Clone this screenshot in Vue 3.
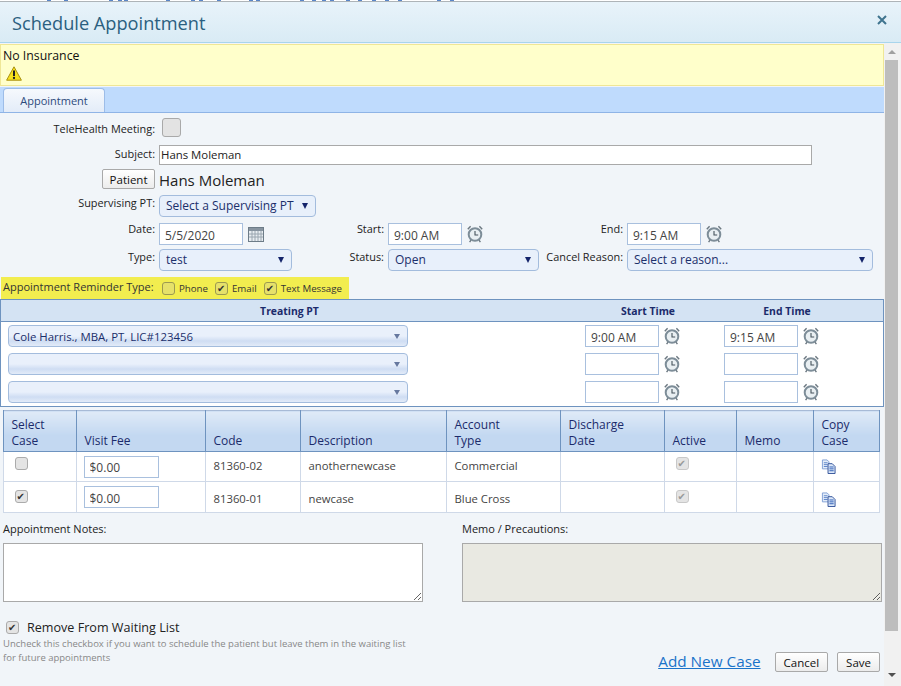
<template>
  <div class="page">
    <svg class="defs" aria-hidden="true">
      <symbol id="clock" viewBox="0 0 16 18">
        <path d="M.8 4.2 L3.6 1.2 M15.2 4.2 L12.4 1.2 M2.6 17.2 L4 15.2 M13.4 17.2 L12 15.2" stroke="#6b7780" stroke-width="1.4" fill="none" />
        <circle cx="8" cy="9.5" r="6.3" fill="#e9eff2" stroke="#7d8d98" stroke-width="2" />
        <path d="M8 6 V10 H11.2" stroke="#46535c" stroke-width="1.1" fill="none" />
      </symbol>
      <symbol id="copy" viewBox="0 0 16 16">
        <path d="M1.5 1 H6.5 L8.5 3 V10.5 H1.5 Z" fill="#e4edf9" stroke="#7f9fd4" />
        <path d="M3 4 H7 M3 6 H7 M3 8 H7" stroke="#5b82c8" />
        <path d="M7.5 5 H12 L15 8 V15.5 H7.5 Z" fill="#dbe7f8" stroke="#2e4f98" />
        <path d="M9 8.5 H13.5 M9 10.5 H13.5 M9 12.5 H13.5" stroke="#2e5db5" />
      </symbol>
    </svg>

    <div class="behind"><i v-for="b in behindBits" :key="b" :style="{ left: b + 'px' }"></i></div>

    <div class="modal">
      <header class="modal-head">
        <h1>Schedule Appointment</h1>
        <svg class="close" viewBox="0 0 10 10"><path d="M1 1 L9 9 M9 1 L1 9" stroke="#3f748f" stroke-width="2" /></svg>
      </header>

      <div class="modal-body">
        <div class="content">
          <div class="notice">
            <div>No Insurance</div>
            <svg class="warn" viewBox="0 0 16 15">
              <path d="M8 .8 L15.4 14.2 H.6 Z" fill="#f7e11c" stroke="#a88f10" stroke-linejoin="round" />
              <path d="M8 4.6 V10" stroke="#222" stroke-width="2" />
              <circle cx="8" cy="12" r="1.15" fill="#222" />
            </svg>
          </div>

          <div class="tabs"><div class="tab">Appointment</div></div>

          <div class="form">
            <div class="row telehealth">
              <label class="lbl">TeleHealth Meeting:</label>
              <span class="toggle"></span>
            </div>
            <div class="row subject">
              <label class="lbl">Subject:</label>
              <input class="subject-input" type="text" value="Hans Moleman" />
            </div>
            <div class="row patient">
              <div class="lbl"><button class="btn">Patient</button></div>
              <span class="patient-name">Hans Moleman</span>
            </div>
            <div class="row supervising">
              <label class="lbl">Supervising PT:</label>
              <div class="sel sup-sel"><select><option>Select a Supervising PT</option></select></div>
            </div>

            <div class="when">
              <label class="lbl up">Date:</label>
              <div class="field">
                <input class="txt date" type="text" value="5/5/2020" />
                <svg class="cal" viewBox="0 0 16 15">
                  <rect x=".5" y=".5" width="15" height="14" fill="#e8edf1" stroke="#6d7c88" />
                  <rect x="1" y="1" width="14" height="3" fill="#8794a0" />
                  <path d="M1 7 H15 M1 10 H15 M4 4 V14 M7 4 V14 M10 4 V14 M13 4 V14" stroke="#9aa6b0" />
                </svg>
              </div>
              <label class="lbl up">Start:</label>
              <div class="field">
                <input class="txt time" type="text" value="9:00 AM" />
                <svg class="clock"><use href="#clock" /></svg>
              </div>
              <label class="lbl up">End:</label>
              <div class="field">
                <input class="txt time" type="text" value="9:15 AM" />
                <svg class="clock"><use href="#clock" /></svg>
              </div>

              <label class="lbl">Type:</label>
              <div class="sel type-sel"><select><option>test</option></select></div>
              <label class="lbl">Status:</label>
              <div class="sel"><select><option>Open</option></select></div>
              <label class="lbl">Cancel Reason:</label>
              <div class="sel"><select><option>Select a reason...</option></select></div>
            </div>
          </div>

          <div class="reminder">
            <span class="reminder-title">Appointment Reminder Type:</span>
            <label v-for="r in reminders" :key="r.name" class="reminder-opt">
              <input type="checkbox" class="cb on-yellow" :checked="r.on" />{{ r.name }}
            </label>
          </div>

          <div class="treating">
            <div class="treating-head">
              <span class="col-pt">Treating PT</span>
              <span class="col-start">Start Time</span>
              <span class="col-end">End Time</span>
            </div>
            <div class="treating-rows">
              <div v-for="(t, i) in treating" :key="i" class="treating-row">
                <div class="sel sel-grad"><select><option>{{ t.name }}</option></select></div>
                <input class="txt time start-in" type="text" :value="t.start" />
                <svg class="clock"><use href="#clock" /></svg>
                <input class="txt time end-in" type="text" :value="t.end" />
                <svg class="clock"><use href="#clock" /></svg>
              </div>
            </div>
          </div>

          <table class="cases">
            <colgroup>
              <col v-for="(w, i) in caseCols" :key="i" :style="{ width: w + 'px' }" />
            </colgroup>
            <thead>
              <tr>
                <th>Select<br />Case</th>
                <th>Visit Fee</th>
                <th>Code</th>
                <th>Description</th>
                <th>Account<br />Type</th>
                <th>Discharge<br />Date</th>
                <th>Active</th>
                <th>Memo</th>
                <th>Copy<br />Case</th>
              </tr>
            </thead>
            <tbody>
              <tr v-for="c in cases" :key="c.code">
                <td class="chk"><input type="checkbox" class="cb" :checked="c.selected" /></td>
                <td class="fee-cell"><input class="txt fee" type="text" value="$0.00" /></td>
                <td>{{ c.code }}</td>
                <td>{{ c.description }}</td>
                <td>{{ c.account }}</td>
                <td></td>
                <td class="chk"><input type="checkbox" class="cb" checked disabled /></td>
                <td></td>
                <td class="ico"><svg class="copy"><use href="#copy" /></svg></td>
              </tr>
            </tbody>
          </table>

          <div class="notes">
            <div class="note-col">
              <label>Appointment Notes:</label>
              <textarea></textarea>
            </div>
            <div class="note-col memo">
              <label>Memo / Precautions:</label>
              <textarea disabled></textarea>
            </div>
          </div>

          <div class="foot">
            <div class="waiting">
              <label class="waiting-check"><input type="checkbox" class="cb" checked />Remove From Waiting List</label>
              <p>Uncheck this checkbox if you want to schedule the patient but leave them in the waiting list for future appointments</p>
            </div>
            <div class="actions">
              <a href="#" class="add-case">Add New Case</a>
              <button class="btn">Cancel</button>
              <button class="btn">Save</button>
            </div>
          </div>
        </div>

        <div class="scrollbar">
          <span class="arrow up"></span>
          <span class="thumb"></span>
          <span class="arrow down"></span>
        </div>
      </div>
    </div>
  </div>
</template>

<script setup>
const behindBits = [47, 64, 109, 118, 124, 166, 191, 199, 217, 249, 256, 300, 312, 322, 330, 346, 358, 372, 385, 398, 437, 450]

const reminders = [
  { name: 'Phone', on: false },
  { name: 'Email', on: true },
  { name: 'Text Message', on: true },
]

const treating = [
  { name: 'Cole Harris., MBA, PT, LIC#123456', start: '9:00 AM', end: '9:15 AM' },
  { name: '', start: '', end: '' },
  { name: '', start: '', end: '' },
]

const caseCols = [73, 129, 95, 146, 114, 104, 72, 77, 66]

const cases = [
  { code: '81360-02', description: 'anothernewcase', account: 'Commercial', selected: false },
  { code: '81360-01', description: 'newcase', account: 'Blue Cross', selected: true },
]
</script>

<style>
html,
body {
  margin: 0;
  background: #fff;
  overflow: hidden;
}
</style>

<style scoped>
.page {
  width: 901px;
  height: 686px;
  overflow: hidden;
  font-family: "Open Sans", "Liberation Sans", sans-serif;
  font-size: 11px;
  color: #222;
  background: #f1f5f9;
}
.defs {
  position: absolute;
  width: 0;
  height: 0;
}
.behind {
  position: relative;
  height: 1px;
  background: #fff;
  overflow: hidden;
}
.behind i {
  position: absolute;
  top: 0;
  width: 4px;
  height: 1px;
  background: #5a86c8;
}
.modal {
  border-top: 1px solid #aeb4b8;
}
.modal-head {
  display: flex;
  align-items: center;
  justify-content: space-between;
  height: 41px;
  padding: 2px 14px 0 12px;
  box-sizing: border-box;
  background: linear-gradient(#e8f3fa, #d9ebf5);
  border-bottom: 1px solid #a9d5ec;
}
.modal-head h1 {
  margin: 0;
  font-size: 18.2px;
  font-weight: 400;
  color: #2b5f80;
}
.close {
  width: 10px;
  height: 10px;
  margin-bottom: 6px;
}
.modal-body {
  display: flex;
}
.content {
  width: 884px;
  flex: none;
}
.notice {
  height: 42px;
  margin-top: 1px;
  padding: 3px 2px 0;
  box-sizing: border-box;
  background: #ffffcb;
  border: 1px solid #efe796;
  font-size: 12.3px;
  color: #111;
  line-height: 16px;
}
.warn {
  display: block;
  width: 16px;
  height: 15px;
  margin: 2px 0 0 3px;
}
.tabs {
  height: 26px;
  margin-top: 1px;
  padding: 1px 0 0 3px;
  box-sizing: border-box;
  background: #bfdbfd;
  border-bottom: 1px solid #8fb4e6;
}
.tab {
  width: 102px;
  height: 24px;
  box-sizing: border-box;
  text-align: center;
  line-height: 23px;
  color: #2c4a7c;
  background: linear-gradient(#f6f9fd, #e3ecf8);
  border: 1px solid #9dbde8;
  border-bottom: none;
  border-radius: 4px 4px 0 0;
}
.form {
  padding-top: 5px;
}
.row {
  display: flex;
  align-items: flex-start;
  gap: 4px;
}
.lbl {
  display: block;
  width: 155px;
  flex: none;
  text-align: right;
  font-size: 10.9px;
  color: #222;
  line-height: 15px;
}
.telehealth {
  height: 27px;
}
.telehealth .lbl {
  padding-top: 3px;
}
.toggle {
  width: 19px;
  height: 19px;
  margin-left: 3px;
  box-sizing: border-box;
  background: #e3e3e3;
  border: 1px solid #a9a9a9;
  border-radius: 3px;
}
.subject {
  height: 24px;
}
.subject .lbl {
  padding-top: 1px;
}
.subject-input {
  width: 653px;
  height: 20px;
  padding: 0 1px 1px;
  box-sizing: border-box;
  border: 1px solid #a9a9a9;
  background: #fff;
  font: 11.4px "Open Sans", "Liberation Sans", sans-serif;
  color: #222;
}
.patient {
  height: 26px;
}
.patient .btn {
  padding: 0 6.5px;
}
.patient-name {
  font-size: 15px;
  line-height: 22px;
  color: #222;
}
.btn {
  height: 20px;
  padding: 0 8px;
  box-sizing: border-box;
  background: linear-gradient(#fff, #ececec);
  border: 1px solid #a9a9a9;
  border-radius: 2px;
  font: 11.5px "Open Sans", "Liberation Sans", sans-serif;
  color: #111;
}
.supervising {
  height: 28px;
}
.sel {
  position: relative;
  height: 22px;
}
.sel select {
  appearance: none;
  display: block;
  width: 100%;
  height: 100%;
  padding: 0 18px 2px 6px;
  box-sizing: border-box;
  background: #e8f0fb;
  border: 1px solid #a3bcdd;
  border-radius: 4px;
  font: 12px "Open Sans", "Liberation Sans", sans-serif;
  color: #1b2f6b;
}
.sel::after {
  content: "";
  position: absolute;
  right: 8px;
  top: 8px;
  border-left: 3.5px solid transparent;
  border-right: 3.5px solid transparent;
  border-top: 6px solid #14246b;
}
.sup-sel {
  width: 157px;
}
.when {
  display: grid;
  grid-template-columns: 155px 141px 80px 151px 80px 246px;
  column-gap: 4px;
  row-gap: 4px;
}
.when .lbl {
  width: auto;
}
.when .up {
  margin-top: -2px;
}
.field {
  display: flex;
  align-items: center;
  gap: 5px;
  height: 22px;
}
.type-sel {
  width: 133px;
}
.txt {
  height: 22px;
  padding: 2px 5px 0;
  box-sizing: border-box;
  background: #fff;
  border: 1px solid #a9c0de;
  font: 12px "Open Sans", "Liberation Sans", sans-serif;
  color: #444;
}
.date {
  width: 84px;
}
.time {
  width: 74px;
}
.clock {
  width: 16px;
  height: 18px;
  flex: none;
}
.cal {
  width: 16px;
  height: 15px;
}
.reminder {
  display: flex;
  align-items: center;
  width: 348px;
  height: 22px;
  margin: 6px 0 0 1px;
  padding-left: 2px;
  box-sizing: border-box;
  background: #f2ed4f;
  color: #333;
  white-space: nowrap;
}
.reminder-title {
  flex: none;
  width: 159px;
  margin-bottom: 3px;
  font-size: 11px;
}
.reminder-opt {
  display: flex;
  align-items: center;
  gap: 4px;
  margin-right: 7px;
  font-size: 9.7px;
}
.cb {
  appearance: none;
  position: relative;
  flex: none;
  width: 13px;
  height: 13px;
  margin: 0;
  box-sizing: border-box;
  background: #e4e4e4;
  border: 1px solid #ababab;
  border-radius: 3px;
}
.cb:checked::after {
  content: "✔";
  position: absolute;
  left: 1px;
  top: 0;
  font: 10px/11px "DejaVu Sans", sans-serif;
  color: #333;
}
.cb:disabled {
  border-color: #c8c8c8;
}
.cb:disabled::after {
  color: #999;
}
.on-yellow {
  background: #e6e16a;
  border-color: #9c9a50;
}
.treating {
  height: 108px;
  box-sizing: border-box;
  background: #fff;
  border: 1px solid #6e93bf;
}
.treating-head {
  display: flex;
  height: 22px;
  align-items: center;
  background: #d4e3f3;
  border-bottom: 1px solid #6e93bf;
  font-size: 10.4px;
  font-weight: 700;
  color: #1b2b6b;
  box-sizing: border-box;
}
.treating-head span {
  text-align: center;
}
.col-pt {
  width: 577px;
}
.col-start {
  width: 140px;
}
.col-end {
  width: 138px;
}
.treating-rows {
  display: flex;
  flex-direction: column;
  gap: 6px;
  padding: 3px 0 0 7px;
}
.treating-row {
  display: flex;
  align-items: center;
  gap: 5px;
}
.sel-grad {
  width: 400px;
}
.sel-grad select {
  padding: 0 18px 0 4px;
  font-size: 11.4px;
  background: linear-gradient(#e9f0fb 50%, #cfddf3 75%, #e2ebf8);
}
.sel-grad::after {
  top: 9px;
  border-top-color: #66789f;
  border-top-width: 5px;
}
.start-in {
  margin-left: 172px;
}
.end-in {
  margin-left: 39px;
}
.cases {
  width: 876px;
  margin: 3px 0 0 3px;
  table-layout: fixed;
  border-collapse: collapse;
  background: #fff;
  border: 1px solid #a7bad6;
}
.cases th {
  height: 41px;
  padding: 0 7.5px 2px;
  box-sizing: border-box;
  vertical-align: bottom;
  text-align: left;
  font-weight: 400;
  font-size: 12px;
  line-height: 16px;
  color: #1b2b6b;
  background: linear-gradient(#dfeaf7, #c3d8f1 60%);
  border: 1px solid #6e93bf;
  border-top: none;
}
.cases td {
  padding: 6px 7.5px 0;
  height: 30px;
  box-sizing: border-box;
  border: 1px solid #cfd9e8;
  font-size: 11.3px;
  line-height: 15px;
  color: #444;
  vertical-align: top;
}
.cases tr:nth-child(2) td {
  height: 31px;
  padding-top: 9px;
}
.cases td.chk {
  padding-top: 5px;
}
.cases tr:nth-child(2) td.chk {
  padding-top: 8px;
}
.cases td.ico {
  padding: 7px 0 0 7px;
}
.cases tr:nth-child(2) td.ico {
  padding-top: 10px;
}
.cases td.fee-cell,
.cases tr:nth-child(2) td.fee-cell {
  padding-top: 0;
  vertical-align: middle;
}
.cases .cb {
  display: block;
  margin-left: 3px;
}
.fee {
  display: block;
  width: 75px;
  margin-left: -1px;
}
.copy {
  display: block;
  width: 15px;
  height: 15px;
}
.notes {
  display: flex;
  gap: 39px;
  margin: 8px 0 0 3px;
}
.note-col {
  width: 420px;
  flex: none;
}
.note-col label {
  display: block;
  height: 22px;
  line-height: 15px;
  color: #222;
}
.note-col textarea {
  display: block;
  width: 420px;
  height: 59px;
  box-sizing: border-box;
  background: #fff;
  border: 1px solid #a9a9a9;
  border-radius: 0;
  resize: both;
}
.note-col textarea:disabled {
  background: #e9e9e2;
}
.foot {
  display: flex;
  justify-content: space-between;
  align-items: flex-start;
  margin-top: 17px;
  padding: 0 4px 0 3px;
}
.waiting {
  width: 415px;
}
.waiting-check {
  display: flex;
  align-items: center;
  gap: 8px;
  padding-left: 3px;
  font-size: 12.6px;
  color: #222;
}
.waiting p {
  margin: 1px 0 0;
  font-size: 9.5px;
  line-height: 14px;
  color: #888;
}
.actions {
  display: flex;
  align-items: center;
  gap: 9px;
  margin-top: 32px;
}
.add-case {
  margin-right: 5px;
  margin-bottom: 2px;
  font-size: 15.3px;
  color: #1a73c9;
}
.scrollbar {
  flex: 1;
  display: flex;
  flex-direction: column;
  align-items: flex-start;
  height: 643px;
  padding-left: 1px;
  background: #f1f1f1;
}
.thumb {
  width: 13px;
  height: 571px;
  background: #bdbdbd;
}
.arrow {
  width: 0;
  height: 0;
  margin-left: 2.5px;
  border-left: 4px solid transparent;
  border-right: 4px solid transparent;
}
.arrow.up {
  margin-top: 7px;
  margin-bottom: 6px;
  border-bottom: 4px solid #a0a0a0;
}
.arrow.down {
  margin-top: 42px;
  border-top: 4px solid #505050;
}
</style>
